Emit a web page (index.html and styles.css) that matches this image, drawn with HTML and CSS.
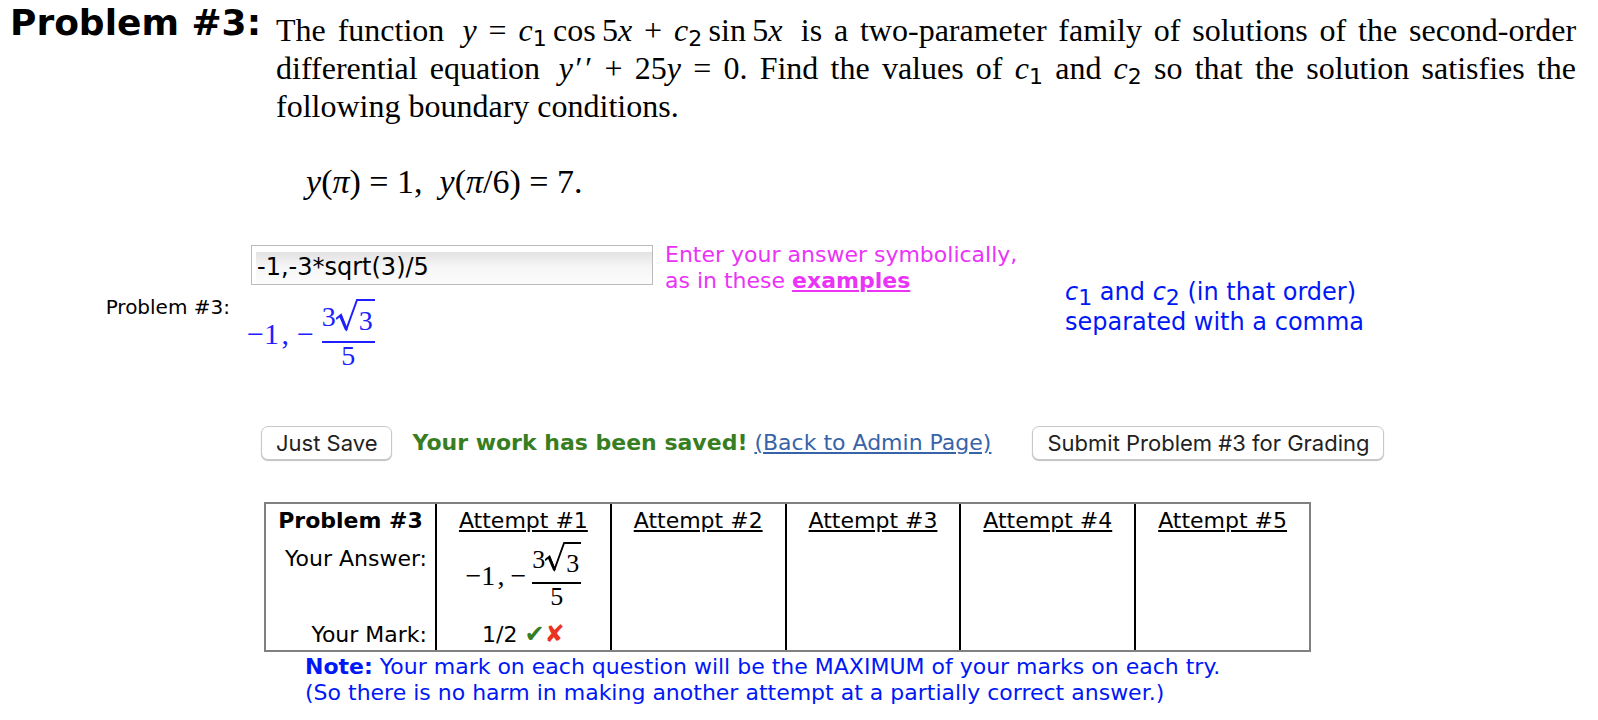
FILE: index.html
```html
<!DOCTYPE html>
<html lang="en">
<head>
    <meta charset="UTF-8">
    <meta name="viewport" content="width=device-width, initial-scale=1.0">
    <title>Problem #3</title>
    <link rel="stylesheet" href="styles.css">
</head>
<body>

<div class="problem">
    <h1>Problem #3:</h1>
    <div class="question">
        <p>The function &#8201;<i>y</i> = <i>c</i><sub>1</sub>&#8201;cos&#8201;5<i>x</i> + <i>c</i><sub>2</sub>&#8201;sin&#8201;5<i>x</i>&#8201; is a two-parameter family of solutions of the second-order differential equation &#8201;<i>y</i>&#8202;&prime;&#8202;&prime; + 25<i>y</i> = 0. Find the values of <i>c</i><sub>1</sub> and <i>c</i><sub>2</sub> so that the solution satisfies the following boundary conditions.</p>
        <p class="conditions"><i>y</i>(<i>&pi;</i>) = 1,&nbsp; <i>y</i>(<i>&pi;</i>/6) = 7.</p>
    </div>
</div>

<form class="answer" action="#">
    <label for="answer">Problem #3:</label>
    <div class="field">
        <input type="text" name="answer" id="answer" value="-1,-3*sqrt(3)/5">
        <div class="math preview">
            <span>&minus;1&#8202;,</span>
            <span>&minus;</span>
            <span class="frac">
                <span class="num">3<svg class="radical" viewBox="0 0 22 34" aria-hidden="true"><path d="M0 20L5 16L10.500 30L21 1H22" /><path class="thick" d="M4.500 17L10.500 31" /></svg><span class="radicand">3</span></span>
                <span class="den">5</span>
            </span>
        </div>
    </div>
    <p class="hint">Enter your answer symbolically,<br>as in these <a href="#">examples</a></p>
    <p class="format"><i>c</i><sub>1</sub> and <i>c</i><sub>2</sub> (in that order)<br>separated with a comma</p>
</form>

<div class="actions">
    <button type="button">Just Save</button>
    <p><b>Your work has been saved!</b> <a href="#">(Back to Admin Page)</a></p>
    <button type="submit">Submit Problem #3 for Grading</button>
</div>

<div class="results">
    <table>
        <thead>
            <tr>
                <th>Problem #3</th>
                <td>Attempt #1</td>
                <td>Attempt #2</td>
                <td>Attempt #3</td>
                <td>Attempt #4</td>
                <td>Attempt #5</td>
            </tr>
        </thead>
        <tbody>
            <tr class="given">
                <th>Your Answer:</th>
                <td>
                    <div class="math">
                        <span>&minus;1&#8202;,</span>
                        <span>&minus;</span>
                        <span class="frac">
                            <span class="num">3<svg class="radical" viewBox="0 0 22 34" aria-hidden="true"><path d="M0 20L5 16L10.500 30L21 1H22" /><path class="thick" d="M4.500 17L10.500 31" /></svg><span class="radicand">3</span></span>
                            <span class="den">5</span>
                        </span>
                    </div>
                </td>
                <td></td>
                <td></td>
                <td></td>
                <td></td>
            </tr>
            <tr>
                <th>Your Mark:</th>
                <td>1/2 <span class="right">&#10004;</span><span class="wrong">&#10008;</span></td>
                <td></td>
                <td></td>
                <td></td>
                <td></td>
            </tr>
        </tbody>
    </table>
    <p class="note"><b>Note:</b> Your mark on each question will be the MAXIMUM of your marks on each try.<br>(So there is no harm in making another attempt at a partially correct answer.)</p>
</div>

</body>
</html>
```
FILE: styles.css
```css
body {
    margin: 0;
    padding: 2px 22px 10px 10px;
    font-family: "DejaVu Sans", Verdana, sans-serif;
    font-size: 22px;
    line-height: 26px;
    color: #000;
    background: #fff;
}
p {
    margin: 0;
}
sub {
    font-size: 22px;
    line-height: 0;
    vertical-align: -5px;
}

.problem {
    display: flex;
    gap: 15px;
}
.problem h1 {
    flex: none;
    margin: 0;
    font-size: 36px;
    line-height: 42px;
}
.question {
    padding-top: 9px;
    font-family: "Liberation Serif", "Times New Roman", serif;
    font-size: 32px;
    line-height: 38px;
    text-align: justify;
}
.question sub {
    font-family: "DejaVu Sans", Verdana, sans-serif;
}
.question .conditions {
    margin: 38px 0 0 30px;
    font-size: 34px;
}

.answer {
    display: flex;
    align-items: center;
    margin-top: 44px;
}
.answer label {
    width: 220px;
    margin-right: 21px;
    font-size: 20px;
    text-align: right;
}
.answer input {
    box-sizing: border-box;
    display: block;
    width: 402px;
    height: 40px;
    padding: 4px 5px 0;
    border: 1px solid #bbb;
    font: inherit;
    font-size: 24px;
    color: #000;
    background: linear-gradient(#e2e2e2, #f6f6f6 40%, #fdfdfd) no-repeat 4px 6px;
}
.hint {
    align-self: flex-start;
    width: 400px;
    margin-left: 12px;
    margin-top: -3px;
    color: #ea33f7;
}
.hint a {
    font-weight: bold;
    color: #ea33f7;
}
.format {
    font-size: 24px;
    line-height: 30px;
    color: #0018f5;
}

.math {
    display: inline-flex;
    align-items: center;
    gap: 6px;
    font-family: "Liberation Serif", "Times New Roman", serif;
    font-size: 28px;
}
.frac {
    display: flex;
    flex-direction: column;
    align-items: center;
    font-size: 26px;
}
.num {
    display: flex;
    align-items: flex-start;
    height: 40px;
    border-bottom: 2px solid;
    line-height: 36px;
}
.den {
    line-height: 26px;
}
.radical {
    width: 20px;
    height: 31px;
    fill: none;
    stroke: currentColor;
    stroke-width: 2;
}
.radical .thick {
    stroke-width: 3;
}
.radicand {
    padding: 0 2px 0 1px;
    border-top: 2px solid;
    line-height: 40px;
}
.preview {
    gap: 8px;
    margin: 14px 0 0 -4px;
    font-size: 30px;
    color: #2020ff;
}
.preview .frac {
    font-size: 28px;
}
.preview .num {
    height: 42px;
}
.preview .radical {
    width: 22px;
    height: 34px;
}

.actions {
    display: flex;
    align-items: center;
    margin: 57px 0 0 251px;
}
.actions button {
    height: 34px;
    padding: 0 14px;
    border: 1px solid #c8c8c8;
    border-radius: 7px;
    font-family: Inter, Helvetica, sans-serif;
    font-size: 22px;
    color: #222;
    background: #fff;
    box-shadow: 0 1px 1px rgba(0,0,0,.25);
}
.actions p {
    margin: 0 41px 0 20px;
}
.actions b {
    color: #377e22;
}
.actions a {
    color: #3764a8;
}

.results {
    margin: 42px 0 0 254px;
}
table {
    table-layout: fixed;
    width: 1047px;
    border: 2px solid #808080;
    border-spacing: 0;
}
th, td {
    padding: 4px 2px 2px;
    border-left: 2px solid #000;
    text-align: center;
    vertical-align: top;
}
th {
    width: 165px;
    border-left: 0;
}
thead td {
    text-decoration: underline;
}
tbody th {
    padding-right: 8px;
    font-weight: normal;
    text-align: right;
}
.given th {
    padding-top: 10px;
}
.given td {
    height: 74px;
    padding-top: 6px;
}
.right, .wrong {
    font-size: 24px;
    line-height: 0;
}
.right {
    color: #377e22;
}
.wrong {
    color: #ea3323;
}
.note {
    margin: 2px 0 0 41px;
    color: #0018f5;
}
```
